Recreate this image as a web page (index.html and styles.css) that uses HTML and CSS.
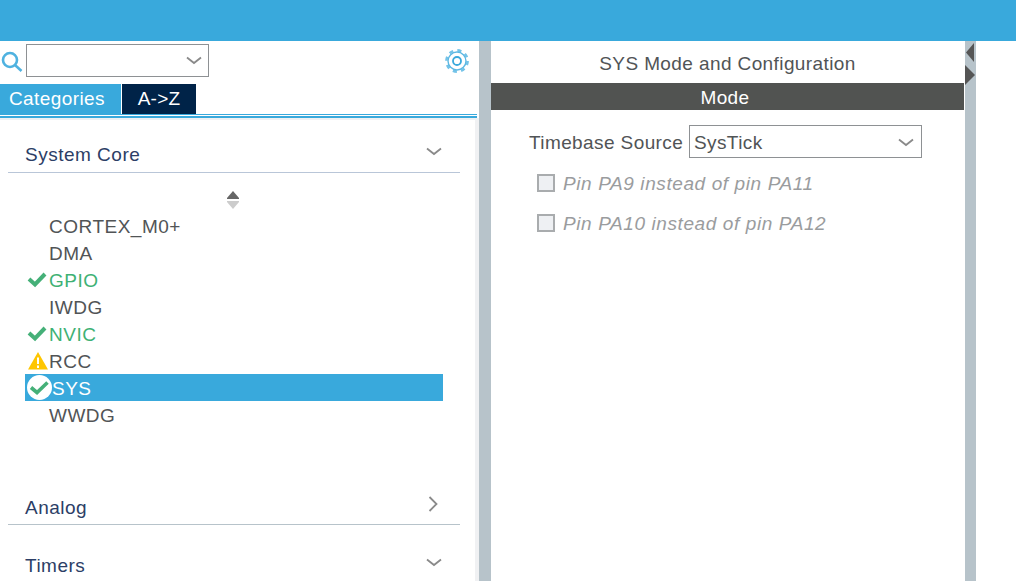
FILE: index.html
```html
<!DOCTYPE html>
<html lang="en">
<head>
    <meta charset="UTF-8">
    <title>SYS Mode and Configuration</title>
    <link rel="stylesheet" href="styles.css">
</head>
<body>
    <div class="topbar"></div>
    <div class="main">
        <div class="left">
            <div class="search-row">
                <svg class="search-icon" width="22" height="22" viewBox="0 0 22 22"><circle cx="9" cy="9" r="7" fill="none" stroke="#4fb2e0" stroke-width="2.6"/><path d="M14 14L20.5 20" stroke="#4fb2e0" stroke-width="2.6" fill="none"/></svg>
                <div class="search-box">
                    <svg class="chev" width="16" height="9" viewBox="0 0 16 9"><path d="M1 1.5L8 7L15 1.5" fill="none" stroke="#8a8a8a" stroke-width="1.8"/></svg>
                </div>
                <svg class="gear" width="26" height="26" viewBox="0 0 26 26">
                    <circle cx="13" cy="13" r="10.6" fill="none" stroke="#74c3e8" stroke-width="2.6" stroke-dasharray="4.1 4.23"/>
                    <circle cx="13" cy="13" r="9" fill="none" stroke="#5cb8e3" stroke-width="1.4"/>
                    <circle cx="13" cy="13" r="4" fill="none" stroke="#39a9dc" stroke-width="1.8"/>
                </svg>
            </div>
            <div class="tabs">
                <div class="tab tab-active">Categories</div>
                <div class="tab tab-dark">A-&gt;Z</div>
            </div>
            <div class="tab-line"></div>

            <div class="group group-first">
                <span class="group-name">System Core</span>
                <svg class="chev" width="16" height="9" viewBox="0 0 16 9"><path d="M1 1.5L8 7L15 1.5" fill="none" stroke="#8a8a8a" stroke-width="1.8"/></svg>
            </div>
            <div class="sorter">
                <svg width="14" height="18" viewBox="0 0 14 18"><path d="M7 0L13 7V8H1V7z" fill="#666"/><path d="M7 18L13 11V10H1V11z" fill="#ccc"/></svg>
            </div>
            <ul class="tree">
                <li class="item"><span class="mark"></span><span class="name">CORTEX_M0+</span></li>
                <li class="item"><span class="mark"></span><span class="name">DMA</span></li>
                <li class="item ok"><span class="mark"><svg width="20" height="16" viewBox="0 0 20 16"><path d="M2 7L8 12.5L18 2" fill="none" stroke="#45b078" stroke-width="4"/></svg></span><span class="name">GPIO</span></li>
                <li class="item"><span class="mark"></span><span class="name">IWDG</span></li>
                <li class="item ok"><span class="mark"><svg width="20" height="16" viewBox="0 0 20 16"><path d="M2 7L8 12.5L18 2" fill="none" stroke="#45b078" stroke-width="4"/></svg></span><span class="name">NVIC</span></li>
                <li class="item warn"><span class="mark"><svg width="20" height="18" viewBox="0 0 20 18"><path d="M10 0L20 17.5H0z" fill="#fec601"/><path d="M10 5.5V12M10 13.5V16" stroke="#fff" stroke-width="2"/></svg></span><span class="name">RCC</span></li>
                <li class="item selected"><span class="mark"><svg width="25" height="25" viewBox="0 0 25 25"><circle cx="12.5" cy="12.5" r="12.5" fill="#fff"/><path d="M4 12.5L10 17.5L20.5 7.5" fill="none" stroke="#45b078" stroke-width="3.6"/></svg></span><span class="name">SYS</span></li>
                <li class="item"><span class="mark"></span><span class="name">WWDG</span></li>
            </ul>
            <div class="group group-analog">
                <span>Analog</span>
                <svg class="chev" width="10" height="16" viewBox="0 0 10 16"><path d="M1.5 1L8.5 8L1.5 15" fill="none" stroke="#8a8a8a" stroke-width="1.8"/></svg>
            </div>
            <div class="group group-timers">
                <span class="group-name">Timers</span>
                <svg class="chev" width="16" height="9" viewBox="0 0 16 9"><path d="M1 1.5L8 7L15 1.5" fill="none" stroke="#8a8a8a" stroke-width="1.8"/></svg>
            </div>
        </div>
        <div class="strip"></div>
        <div class="splitter"></div>
        <div class="center">
            <div class="title">SYS Mode and Configuration</div>
            <div class="mode-bar">Mode</div>
            <div class="form-row">
                <label class="form-label">Timebase Source</label>
                <div class="select">
                    <span class="select-value">SysTick</span>
                    <svg class="chev" width="16" height="9" viewBox="0 0 16 9"><path d="M1 1.5L8 7L15 1.5" fill="none" stroke="#8a8a8a" stroke-width="1.8"/></svg>
                </div>
            </div>
            <div class="check-list">
                <div class="check-row"><span class="check"></span><span class="name">Pin PA9 instead of pin PA11</span></div>
                <div class="check-row"><span class="check"></span><span class="name">Pin PA10 instead of pin PA12</span></div>
            </div>
        </div>
        <div class="splitter splitter-right">
            <svg class="arrow-left" width="9" height="19" viewBox="0 0 9 19"><path d="M8 0V19L0 9.5z" fill="#555"/></svg>
            <svg class="arrow-right" width="10" height="20" viewBox="0 0 10 20"><path d="M0 0L10 10L0 20z" fill="#555"/></svg>
        </div>
    </div>
</body>
</html>
```

FILE: styles.css
```css
* { box-sizing: border-box; }
html, body { margin: 0; height: 100%; overflow: hidden; }
body { font-family: "Liberation Sans", Arial, sans-serif; font-size: 19px; letter-spacing: 0.4px; background: #fff; color: #515456; }

.topbar { height: 41px; background: #39a9dc; }
.main { display: flex; height: 540px; overflow: hidden; }

.left { width: 475px; flex: none; }
.strip { width: 4px; flex: none; margin-top: 77px; background: #f0f1f3; }
.splitter { width: 12px; flex: none; background: #b7c3ca; }
.splitter-right { width: 11px; margin-left: 1px; display: flex; flex-direction: column; align-items: flex-start; }
.center { width: 473px; flex: none; }

.search-row { display: flex; align-items: flex-start; height: 43px; padding: 3px 0 0 1px; }
.search-icon { margin-top: 7px; flex: none; }
.search-box { width: 183px; height: 33px; margin-left: 3px; border: 1px solid #8e9194; display: flex; align-items: center; justify-content: flex-end; padding-right: 6px; }
.gear { margin: 4px 0 0 235px; flex: none; }

.tabs { display: flex; height: 30px; }
.tab { color: #fff; line-height: 30px; }
.tab-active { width: 121px; background: #39a9dc; padding-left: 9px; }
.tab-dark { width: 74px; margin-left: 1px; background: #002348; text-align: center; letter-spacing: 0.2px; }
.tab-line { position: relative; height: 4px; width: 477px; border-top: 1px solid #39a9dc; border-bottom: 2px solid #39a9dc; background: #fff; box-shadow: 0 2px 0 #f0f1f3; }

.group { display: flex; justify-content: space-between; align-items: center; margin-left: 8px; width: 452px; padding: 0 18px 0 17px; color: #2c3e66; letter-spacing: 0.5px; border-bottom: 1px solid #b9c6d8; }
.group-name { padding-top: 2px; }
.group-first { height: 55px; padding-top: 18px; }
.group-first .chev { margin-top: -6px; }
.group-analog { height: 34px; margin-top: 63px; border-bottom-color: #b7c3ca; padding-right: 22px; }
.group-analog .chev { margin-top: -8px; }
.group-timers { height: 56px; padding-top: 24px; border-bottom: none; }
.group-timers .chev { margin-top: -6px; }

.sorter { display: flex; justify-content: center; width: 466px; padding-top: 18px; height: 39px; }

.tree { list-style: none; margin: 0; padding: 0 0 0 25px; width: 443px; letter-spacing: 0.5px; }
.item { display: flex; align-items: center; height: 27px; }
.name { padding-top: 2px; }
.mark { width: 24px; height: 27px; flex: none; display: flex; align-items: center; justify-content: center; }
.ok { color: #3eb174; }
.warn .mark { padding-left: 2px; }
.selected { background: #39a9dc; color: #fff; }
.selected .mark { width: 27px; padding-left: 1px; }

.title { height: 42px; line-height: 45px; text-align: center; }
.mode-bar { height: 27px; line-height: 30px; padding-right: 5px; background: #515351; color: #fff; text-align: center; }
.form-row { display: flex; align-items: center; margin: 15px 0 0 38px; height: 33px; }
.form-label { width: 160px; flex: none; padding-top: 3px; }
.select { width: 233px; height: 33px; border: 1px solid #8e9194; display: flex; align-items: center; justify-content: space-between; padding: 1px 7px 0 4px; }
.select-value { padding-top: 2px; }

.check-list { margin-top: 5px; }
.check-row { display: flex; align-items: center; height: 40px; margin-left: 46px; color: #9a9c9e; font-style: italic; letter-spacing: 0.6px; }
.check { width: 18px; height: 18px; margin-right: 8px; border: 2px solid #a9acae; background: #eef0f3; flex: none; }

.arrow-left { margin: 2px 0 0 1px; }
.arrow-right { margin-top: 3px; }
```
